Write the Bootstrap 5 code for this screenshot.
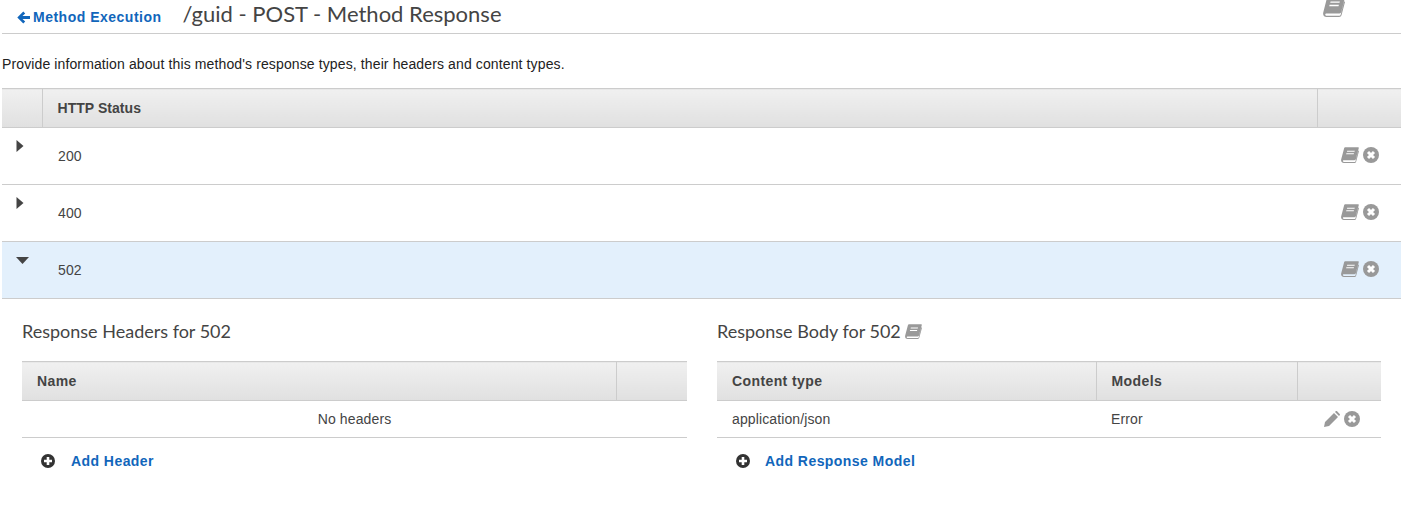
<!DOCTYPE html>
<html lang="en">
<head>
<meta charset="utf-8">
<title>Method Response</title>
<link rel="stylesheet" href="https://cdn.jsdelivr.net/npm/bootstrap@5.3.0/dist/css/bootstrap.min.css">
<style>
body{font-family:"Liberation Sans",Arial,sans-serif;font-size:14px;letter-spacing:.12px;color:#444;background:#fff;width:1401px;overflow:hidden}
.page-head{height:34px;border-bottom:1px solid #ccc;margin-left:2px;position:relative}
.back-link{font-weight:700;color:#1166bb;text-decoration:none;margin-left:15px;margin-top:9px;line-height:16px;display:flex;align-items:center;gap:3px;letter-spacing:.5px}
.page-title{font-family:Lato,sans-serif;font-size:22px;font-weight:400;color:#444;margin:0 0 0 21px;line-height:28px;letter-spacing:0}
.head-book{position:absolute;left:1321px;top:-3px}
.intro{margin:22px 0 16px 2px;line-height:16px;color:#222}
.aws-table{margin:0;width:100%;table-layout:fixed;border-collapse:collapse;color:#444}
.aws-table th{height:39px;padding:0 15px;background:linear-gradient(#f0f0f0,#e0e0e0);border-top:1px solid #ccc;border-bottom:1px solid #ccc;font-weight:700;color:#444;vertical-align:middle;box-shadow:none;letter-spacing:.4px}
.aws-table th+th{border-left:1px solid #ccc}
.aws-table td{border-bottom:1px solid #ccc;padding:0 15px;color:#444;vertical-align:middle;background:transparent;box-shadow:none}
.status-table{margin-left:2px;width:1399px}
.status-table th.status-head{letter-spacing:.05px}
.status-table td{height:57px;padding:1px 15px 0 16px}
.status-table td.caret-cell{padding:0;vertical-align:top;position:relative}
.status-table tr.is-open td{background:#e3f0fc}
.caret-right{position:absolute;left:14px;top:12px}
.caret-down{position:absolute;left:14px;top:15px}
.tools{display:flex;justify-content:flex-end;align-items:center;gap:4px;padding-right:7px;margin-top:-4px}
.tools-in{display:flex;justify-content:flex-end;align-items:center;gap:4px;margin-right:6px}
.sub-area{margin:0;padding:0 20px 0 22px;gap:30px;display:flex}
.sub-col{width:665px;flex:none}
.sub-col:last-child{width:664px}
.sub-title{font-family:Lato,sans-serif;font-size:18px;font-weight:400;color:#444;margin:21px 0 19px;line-height:22px;display:flex;align-items:center;gap:4px;letter-spacing:0}
.sub-table td{height:37px}
.add-row{display:flex;align-items:center;gap:15px;margin:14px 0 0 19px;height:18px}
.sub-col:first-child .add-row{gap:16px}
.add-row a{font-weight:700;color:#1166bb;text-decoration:none;letter-spacing:.44px}
</style>
</head>
<body>
<svg width="0" height="0" class="d-block" aria-hidden="true">
<defs>
<symbol id="ic-book" viewBox="0 0 18 15" preserveAspectRatio="none">
<path fill="#999" d="M4.600 0.300h12.600c.5 0 .7.300.6.700l-2.900 10.300c-.2.700-.6 1.100-1.400 1.100H3c-.9 0-1.300.5-1.100 1 .1.500.6.700 1.200.7h10.300c.5 0 .9-.2 1-.6L17.300 3.200l.7.500-2.800 9.800c-.3.900-1 1.500-2 1.500H2.800C1.400 15 .2 14 .1 12.700c0-.4 0-.7.1-1.100L3 1.600C3.200.8 3.800.3 4.600.3z"/>
<path fill="#fff" d="M6.200 3.400h7.600l-.3 1H5.900zM5.400 5.900h7.600l-.3 1H5.100z"/>
</symbol>
<symbol id="ic-close" viewBox="0 0 16 16">
<circle cx="8" cy="8" r="8" fill="#999"/>
<path fill="none" stroke="#fff" stroke-width="3" d="M5 5l6 6M11 5l-6 6"/>
</symbol>
<symbol id="ic-plus" viewBox="0 0 14 14">
<circle cx="7" cy="7" r="7" fill="#333"/>
<path fill="none" stroke="#fff" stroke-width="2.600" d="M7 3v8M3 7h8"/>
</symbol>
<symbol id="ic-pencil" viewBox="0 0 16 16">
<path fill="#999" d="M0 16l1-5L10 2l4 4-9 9zM11 1l.7-.7c.4-.4 1-.4 1.400 0l2.600 2.600c.4.400.4 1 0 1.400L15 5z"/>
</symbol>
</defs>
</svg>

<div class="page-head d-flex align-items-start">
  <a href="#" class="back-link">
    <svg width="13" height="13" viewBox="0 0 13 13"><path fill="#1166bb" d="M6.300 0.500l1.900 1.900-2.700 2.700H13v2.800H5.500l2.700 2.700-1.900 1.900L0.300 6.500z"/></svg>
    Method Execution
  </a>
  <h1 class="page-title">/guid - POST - Method Response</h1>
  <svg class="head-book" width="22" height="20"><use href="#ic-book"/></svg>
</div>

<p class="intro">Provide information about this method's response types, their headers and content types.</p>

<table class="table aws-table status-table">
  <colgroup><col style="width:40px"><col><col style="width:84px"></colgroup>
  <thead><tr><th></th><th class="status-head">HTTP Status</th><th></th></tr></thead>
  <tbody>
    <tr><td class="caret-cell"><svg class="caret-right" width="8" height="12" viewBox="0 0 8 12"><path fill="#444" d="M0.500 0l7 6-7 6z"/></svg></td><td>200</td>
      <td><div class="tools"><svg width="18" height="16"><use href="#ic-book"/></svg><svg width="16" height="16"><use href="#ic-close"/></svg></div></td></tr>
    <tr><td class="caret-cell"><svg class="caret-right" width="8" height="12" viewBox="0 0 8 12"><path fill="#444" d="M0.500 0l7 6-7 6z"/></svg></td><td>400</td>
      <td><div class="tools"><svg width="18" height="16"><use href="#ic-book"/></svg><svg width="16" height="16"><use href="#ic-close"/></svg></div></td></tr>
    <tr class="is-open"><td class="caret-cell"><svg class="caret-down" width="13" height="7" viewBox="0 0 13 7"><path fill="#444" d="M0 0h13L6.500 7z"/></svg></td><td>502</td>
      <td><div class="tools"><svg width="18" height="16"><use href="#ic-book"/></svg><svg width="16" height="16"><use href="#ic-close"/></svg></div></td></tr>
  </tbody>
</table>

<div class="sub-area">
  <div class="sub-col">
    <h2 class="sub-title">Response Headers for 502</h2>
    <table class="table aws-table sub-table">
      <colgroup><col><col style="width:71px"></colgroup>
      <thead><tr><th>Name</th><th></th></tr></thead>
      <tbody><tr><td colspan="2" class="text-center">No headers</td></tr></tbody>
    </table>
    <div class="add-row"><svg width="14" height="14"><use href="#ic-plus"/></svg><a href="#">Add Header</a></div>
  </div>
  <div class="sub-col">
    <h2 class="sub-title">Response Body for 502 <svg width="17" height="15"><use href="#ic-book"/></svg></h2>
    <table class="table aws-table sub-table">
      <colgroup><col style="width:379px"><col style="width:201px"><col></colgroup>
      <thead><tr><th>Content type</th><th>Models</th><th></th></tr></thead>
      <tbody><tr><td>application/json</td><td>Error</td>
        <td><div class="tools-in"><svg width="16" height="16"><use href="#ic-pencil"/></svg><svg width="16" height="16"><use href="#ic-close"/></svg></div></td></tr></tbody>
    </table>
    <div class="add-row"><svg width="14" height="14"><use href="#ic-plus"/></svg><a href="#">Add Response Model</a></div>
  </div>
</div>
<script src="https://cdn.jsdelivr.net/npm/bootstrap@5.3.0/dist/js/bootstrap.bundle.min.js"></script>
</body>
</html>
